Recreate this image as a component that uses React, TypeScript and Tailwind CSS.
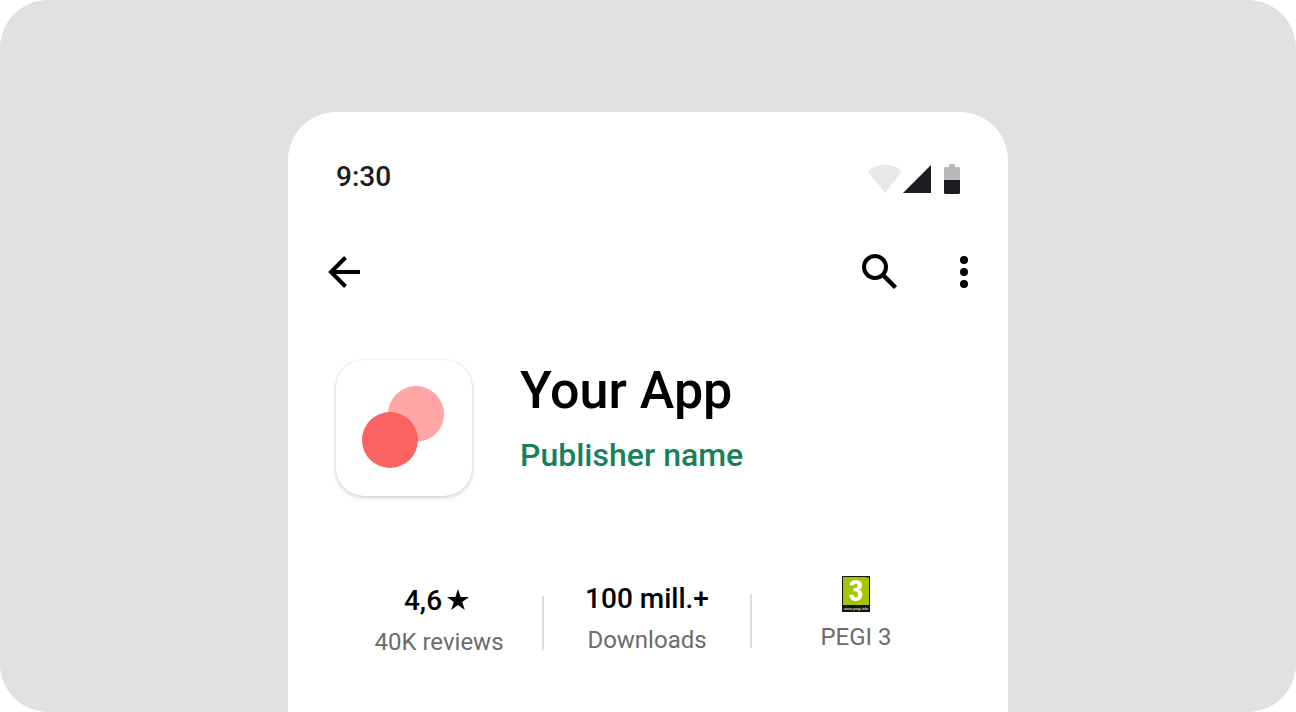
import type { ReactNode } from "react";

interface StatProps {
  label: string;
  className?: string;
  divider?: boolean;
  children: ReactNode;
}

const Stat: React.FC<StatProps> = ({ label, className = "", divider = false, children }) => {
  return (
    <div className={`flex flex-1 items-end ${className}`}>
      <div className="flex flex-1 flex-col items-center">
        <div className="flex min-h-10 items-center text-[28px] font-medium leading-10 text-black">
          {children}
        </div>
        <p className="whitespace-nowrap text-2xl leading-[42px] text-[#6b6b6b]">{label}</p>
      </div>
      {divider && <div className="mb-[13px] h-[54px] w-0.5 bg-[#dcdcdc]" />}
    </div>
  );
};

const StatusIcons = () => (
  <svg width="92" height="30" viewBox="0 0 92 30" aria-hidden="true">
    {/* Wifi */}
    <path d="M0 7.500 C4 3.500 10 0.800 17 0.800 C24 0.800 30 3.500 34 7.500 L17 29 Z" fill="#e8e8e8" />
    {/* Signal */}
    <path d="M63 1 V29 H35 Z" fill="#1c1b20" />
    {/* Battery */}
    <path d="M76 16 V4.500 Q76 3 77.500 3 H81 V0 H87 V3 H90.500 Q92 3 92 4.500 V16 Z" fill="#bababb" />
    <path d="M76 16 H92 V28.500 Q92 30 90.500 30 H77.500 Q76 30 76 28.500 Z" fill="#1c1b20" />
  </svg>
);

const AppIcon = () => (
  <div className="size-[136px] shrink-0 rounded-[28px] bg-white shadow-[0_2px_4px_rgba(0,0,0,0.16),0_0_3px_rgba(0,0,0,0.1)]">
    <svg width="136" height="136" viewBox="0 0 136 136" aria-hidden="true">
      <circle cx="80" cy="54" r="28" fill="#ffa6a6" />
      <circle cx="54" cy="80" r="28" fill="#f96363" />
    </svg>
  </div>
);

const PegiBadge = () => (
  <svg className="my-1 overflow-visible" width="28" height="36" viewBox="0 0 28 36" role="img" aria-label="PEGI 3">
    <rect width="28" height="36" fill="#111408" />
    <rect x="1" y="1" width="26" height="28" fill="#a3c400" />
    <rect x="24" y="1" width="3" height="1" fill="#55660a" />
    <text x="14" y="25" textAnchor="middle" fill="#fff" fontSize="30" fontWeight="700" fontFamily="'Roboto Condensed', 'Open Sans Condensed', Roboto, sans-serif">
      3
    </text>
    <text x="14" y="34" textAnchor="middle" fill="#fff" fontSize="4" fontFamily="'Liberation Sans', sans-serif">
      www.pegi.info
    </text>
  </svg>
);

export default function App() {
  return (
    <div className="flex min-h-screen flex-col items-center overflow-hidden rounded-[48px] bg-[#e1e1e1] pt-28 font-[Roboto,sans-serif]">
      <main className="flex w-full max-w-[720px] flex-1 flex-col rounded-t-[48px] bg-white">
        {/* Status bar */}
        <div className="flex items-start justify-between px-12 pt-11">
          <span className="text-[28px] font-medium leading-[42px] text-[#1c1b20]">9:30</span>
          <div className="pt-2">
            <StatusIcons />
          </div>
        </div>

        {/* Toolbar */}
        <div className="mt-[50px] flex items-center justify-between px-8">
          <button type="button" aria-label="Back" className="size-12">
            <svg width="48" height="48" viewBox="0 0 48 48" fill="none" stroke="#000" strokeWidth="4">
              <path d="M40 24 H12" />
              <path d="M25.500 9.500 L11 24 L25.500 38.500" />
            </svg>
          </button>
          <div className="flex items-center gap-6">
            <button type="button" aria-label="Search" className="size-12">
              <svg width="48" height="48" viewBox="0 0 48 48" fill="none" stroke="#000" strokeWidth="4">
                <circle cx="19" cy="19" r="11" />
                <path d="M27 27 L39.500 39.500" strokeWidth="4.500" />
              </svg>
            </button>
            <button type="button" aria-label="More options" className="size-12">
              <svg width="48" height="48" viewBox="0 0 48 48" fill="#000">
                <circle cx="36" cy="12" r="4" />
                <circle cx="36" cy="24" r="4" />
                <circle cx="36" cy="36" r="4" />
              </svg>
            </button>
          </div>
        </div>

        {/* App header */}
        <div className="mt-16 flex gap-12 px-12">
          <AppIcon />
          <div>
            <h1 className="text-[52px] font-medium leading-[62px] text-black">Your App</h1>
            <p className="mt-2 text-[32px] font-medium leading-[50px] text-[#18815c]">Publisher name</p>
          </div>
        </div>

        {/* Stats */}
        <div className="mt-[76px] flex items-start px-12">
          <Stat label="40K reviews" className="pt-[9px]" divider>
            4,6
            <svg width="32" height="28" viewBox="0 0 32 28" fill="#000" aria-hidden="true">
              <path d="M16 2 L18.600 10 H27 L20.200 14.900 L22.800 23 L16 18 L9.200 23 L11.800 14.900 L5 10 H13.400 Z" />
            </svg>
          </Stat>
          <Stat label="Downloads" className="pt-[7px]" divider>
            100 mill.+
          </Stat>
          <Stat label="PEGI 3">
            <PegiBadge />
          </Stat>
        </div>
      </main>
    </div>
  );
}
